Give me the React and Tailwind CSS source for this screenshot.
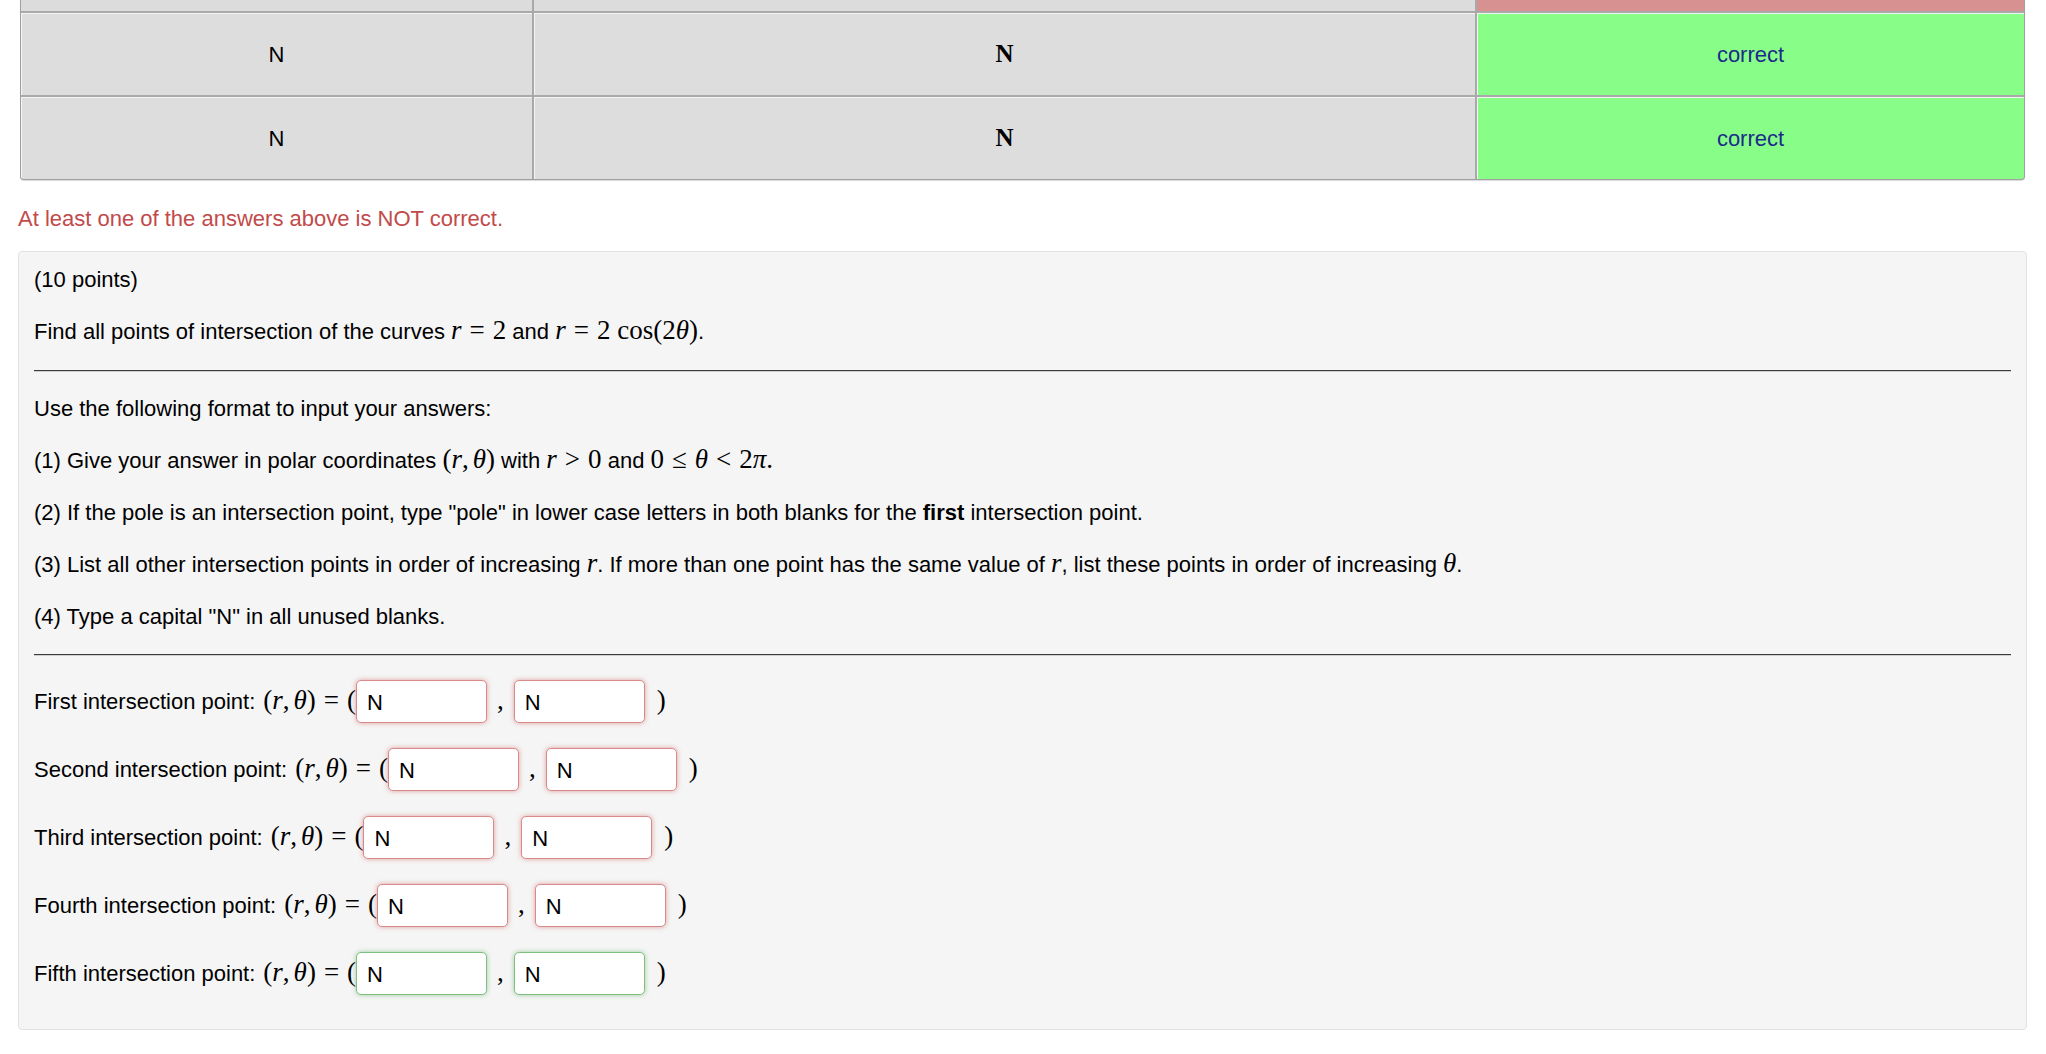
import React from 'react';

const sans = { fontFamily: '"Liberation Sans", Arial, Helvetica, sans-serif' };

// math bits use a times-like face, like MathJax output
const M = ({ children }) => (
    <span className="text-[27px] leading-[20px] whitespace-nowrap" style={{ fontFamily: '"Liberation Serif", "Times New Roman", serif' }}>
        {children}
    </span>
);
const I = ({ children }) => <i>{children}</i>;
const Op = ({ children }) => <span className="mx-[8px]">{children}</span>;
const RT = () => (
    <>
        (<I>r</I>,<span className="ml-[4px]" /><I>θ</I>)
    </>
);

const Cell = ({ children, className = '' }) => (
    <div className={`flex items-center justify-center shadow-[inset_1px_1px_0_#f4f4f4] ${className}`}>{children}</div>
);

const rows = [
    { r: 'N', t: 'N' },
    { r: 'N', t: 'N' },
];

const points = [
    { label: 'First', ok: false },
    { label: 'Second', ok: false },
    { label: 'Third', ok: false },
    { label: 'Fourth', ok: false },
    { label: 'Fifth', ok: true },
];

const Blank = ({ ok }) => (
    <input
        readOnly
        value="N"
        className={`w-[131px] h-[43px] bg-white rounded-[5px] border px-[10px] pt-[2px] text-[22px] text-black outline-none ${
            ok
                ? 'border-[#7fc07f] shadow-[0_0_5px_rgba(90,170,90,0.55)]'
                : 'border-[#d88a8a] shadow-[0_0_5px_rgba(210,90,90,0.55)]'
        }`}
        style={sans}
    />
);

export default function App() {
    return (
        <div className="w-full h-[1054px] overflow-hidden bg-white text-[22px] text-black" style={sans}>
            {/* Results table (scrolled, top row cut off) */}
            <div className="ml-[20px] mr-[21px] grid grid-cols-[511px_941px_1fr] gap-[2px] bg-[#a9a9a9] border-x border-b border-[#a0a0a0] rounded-b-[4px] overflow-hidden shadow-[0_1px_1px_rgba(0,0,0,0.15)]">
                <div className="h-[11px] bg-[#dcdcdc]" />
                <div className="h-[11px] bg-[#dcdcdc]" />
                <div className="h-[11px] bg-[#d79190]" />
                {rows.map((row, i) => (
                    <React.Fragment key={i}>
                        <Cell className="h-[82px] bg-[#dddddd]">
                            <span className="text-[22px]">{row.r}</span>
                        </Cell>
                        <Cell className="h-[82px] bg-[#dddddd]">
                            <span className="text-[25px] font-bold" style={{ fontFamily: '"Liberation Serif", serif' }}>{row.t}</span>
                        </Cell>
                        <Cell className="h-[82px] bg-[#88fe88]">
                            <span className="text-[22px] text-[#1b2b8a]">correct</span>
                        </Cell>
                    </React.Fragment>
                ))}
            </div>

            <p className="ml-[18px] mt-[26px] leading-[26px] text-[#c24a4a]">At least one of the answers above is NOT correct.</p>

            {/* Problem well */}
            <div className="ml-[18px] mr-[19px] mt-[19px] h-[779px] bg-[#f5f5f5] border border-[#e2e2e2] rounded-[4px] pt-[15px] pl-[15px] pr-[15px]">
                <p className="leading-[26px]">(10 points)</p>
                <p className="leading-[26px] mt-[26px]">
                    Find all points of intersection of the curves <M><I>r</I><Op>=</Op>2</M> and <M><I>r</I><Op>=</Op>2 cos(2<I>θ</I>)</M>.
                </p>
                <div className="mt-[25px] h-[2px] bg-[#3a3a3a] border-b border-[#cfcfcf]" />

                <p className="leading-[26px] mt-[24px]">Use the following format to input your answers:</p>
                <p className="leading-[26px] mt-[26px]">
                    (1) Give your answer in polar coordinates <M><RT /></M> with <M><I>r</I><Op>&gt;</Op>0</M> and <M>0<Op>≤</Op><I>θ</I><Op>&lt;</Op>2<I>π</I>.</M>
                </p>
                <p className="leading-[26px] mt-[26px]">
                    (2) If the pole is an intersection point, type "pole" in lower case letters in both blanks for the <b>first</b> intersection point.
                </p>
                <p className="leading-[26px] mt-[26px]">
                    (3) List all other intersection points in order of increasing <M><I>r</I></M>. If more than one point has the same value of <M><I>r</I></M>, list these points in order of increasing <M><I>θ</I></M>.
                </p>
                <p className="leading-[26px] mt-[26px]">(4) Type a capital "N" in all unused blanks.</p>
                <div className="mt-[24px] h-[2px] bg-[#3a3a3a] border-b border-[#cfcfcf]" />

                <div className="mt-[24px] flex flex-col gap-[25px]">
                    {points.map((p) => (
                        <div key={p.label} className="flex items-center h-[43px]">
                            <span>{p.label} intersection point:</span>
                            <span className="ml-[8px]"><M><RT /><Op>=</Op>(</M></span>
                            <Blank ok={p.ok} />
                            <span className="mx-[10px]"><M>,</M></span>
                            <Blank ok={p.ok} />
                            <span className="ml-[12px]"><M>)</M></span>
                        </div>
                    ))}
                </div>
            </div>
        </div>
    );
}
